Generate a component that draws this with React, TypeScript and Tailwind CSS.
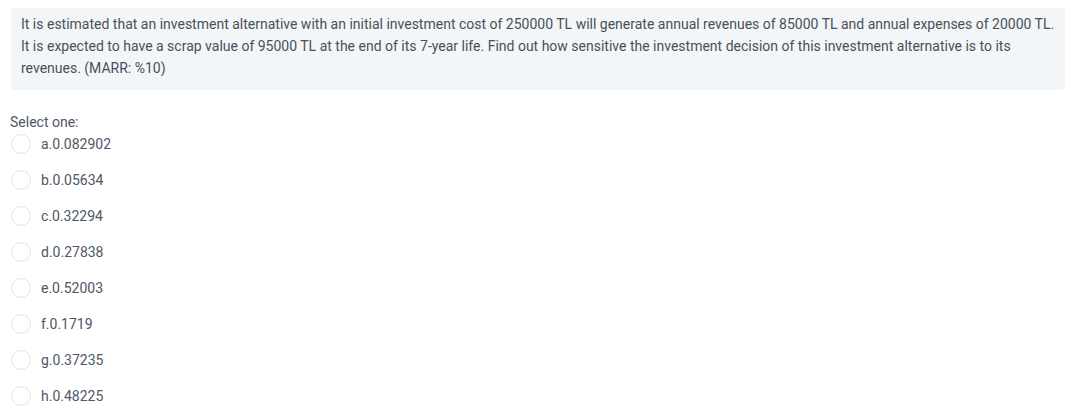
import React from "react";

const options = [
  "a.0.082902",
  "b.0.05634",
  "c.0.32294",
  "d.0.27838",
  "e.0.52003",
  "f.0.1719",
  "g.0.37235",
  "h.0.48225",
];

export default function App() {
  return (
    <div className="bg-white w-[1066px] h-[419px] overflow-hidden pt-[8px] pl-[11px] pr-[1px]" style={{ fontFamily: "Roboto, 'Liberation Sans', sans-serif" }}>
      <div className="bg-[#f3f6f9] rounded-[4px] pl-[10px] pr-[10px] pt-[5px] pb-[11px] text-[14px] leading-[22px] text-[#495057]">
        It is estimated that an investment alternative with an initial investment cost of 250000 TL will generate annual revenues of 85000 TL and annual expenses of 20000 TL. It is expected to have a scrap value of 95000 TL at the end of its 7-year life. Find out how sensitive the investment decision of this investment alternative is to its revenues. (MARR: %10)
      </div>
      <div className="mt-[23px] -ml-[1px] text-[14px] leading-[18px] text-[#4d5766]">Select one:</div>
      <div className="flex flex-col -mt-[5px]">
        {options.map((o) => (
          <div key={o} className="flex items-center h-[36px]">
            <span className="w-[20px] h-[20px] rounded-full border border-[#dfe3e6] bg-white shrink-0" />
            <span className="ml-[10px] text-[14px] text-[#4d5766]">{o}</span>
          </div>
        ))}
      </div>
    </div>
  );
}
